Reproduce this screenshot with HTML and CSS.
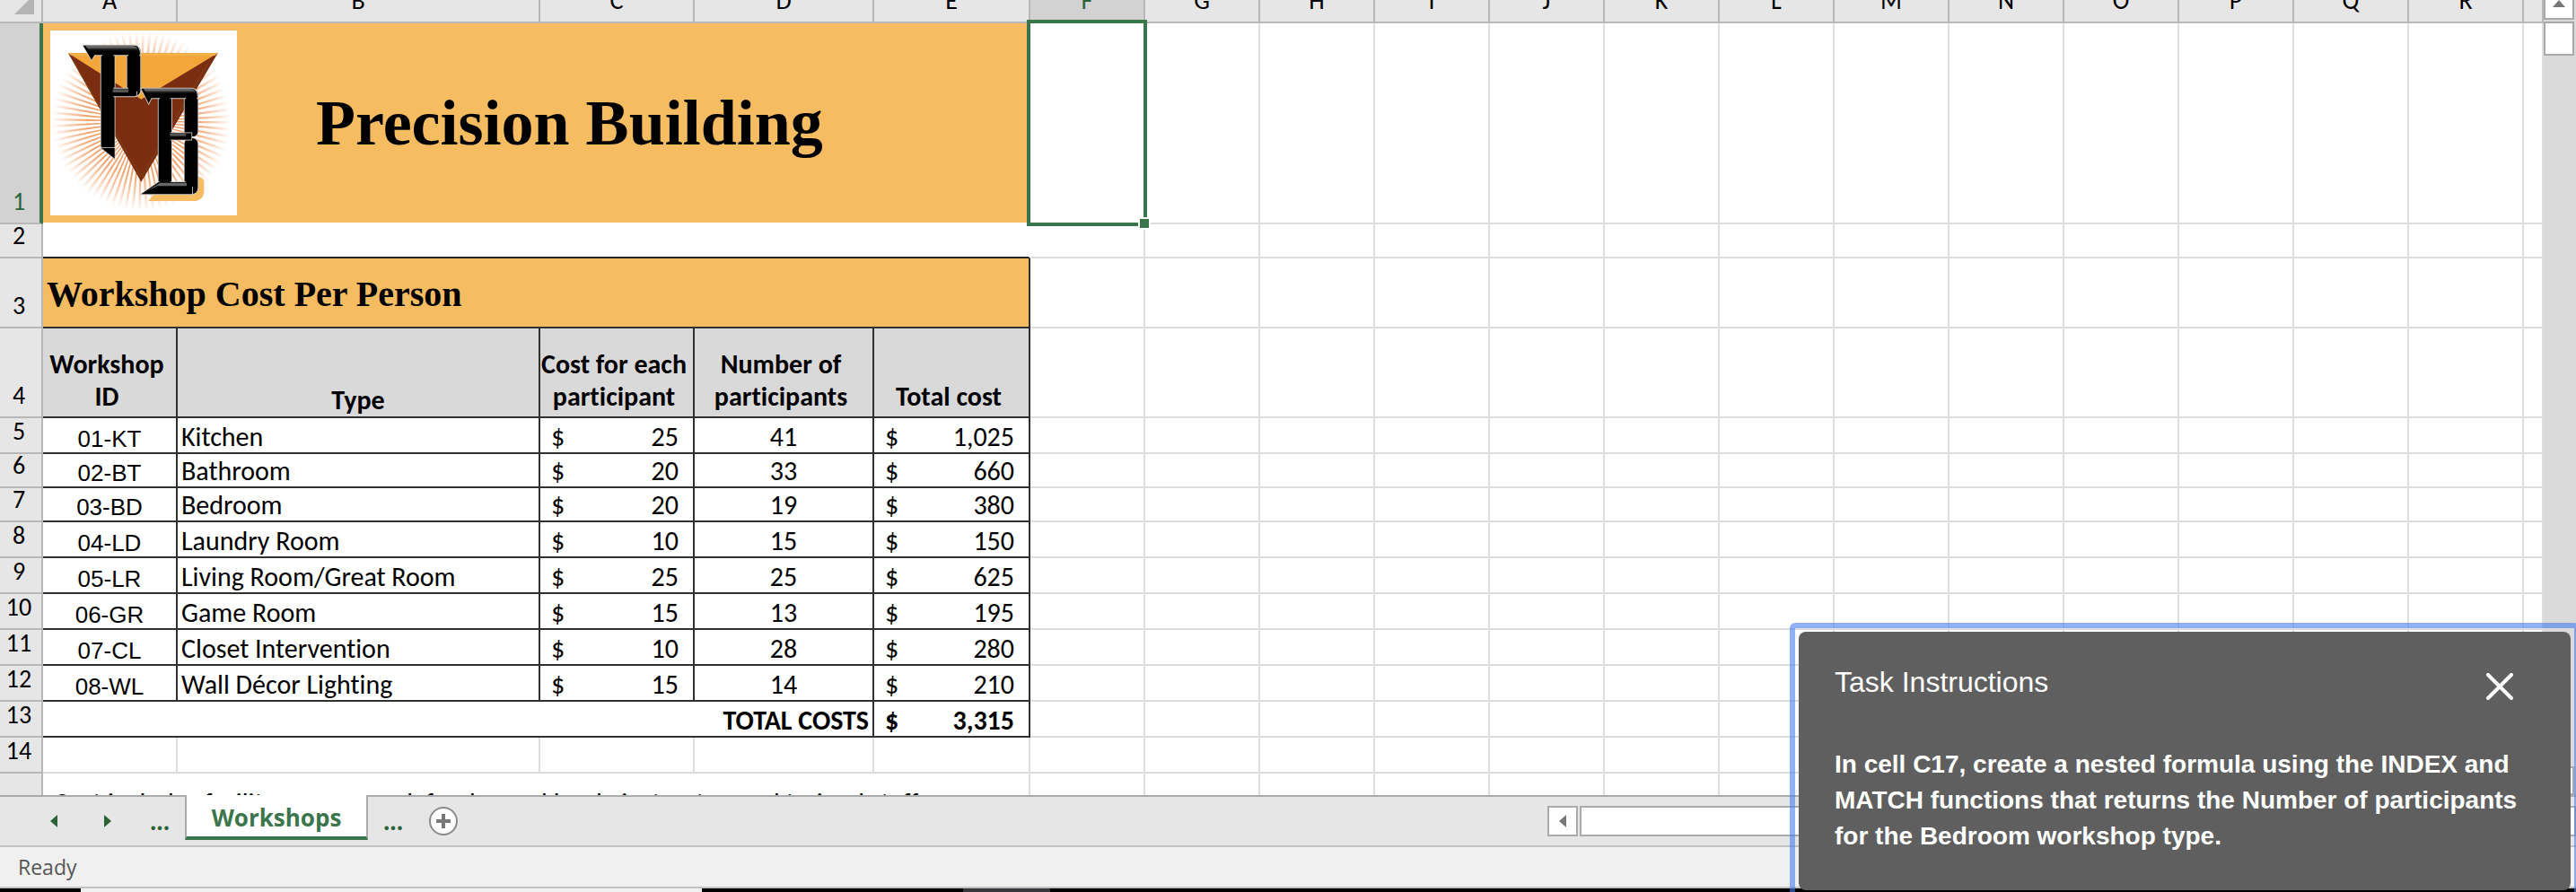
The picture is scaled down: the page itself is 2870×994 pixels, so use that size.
FILE: index.html
```
<!DOCTYPE html>
<html lang="en">
<head>
<meta charset="utf-8">
<title>Precision Building - Workshops</title>
<link rel="stylesheet" href="styles.css">
</head>
<body>
<main class="workspace">
  <div class="viewport">
    <table class="sheet">
      <colgroup>
        <col class="col-head"><col class="col-a"><col class="col-b"><col class="col-c"><col class="col-d"><col class="col-e">
        <col class="col-std" span="13"><col>
      </colgroup>
      <thead>
        <tr class="letters">
          <th class="corner"><svg class="corner-mark" viewBox="0 0 22 22" aria-hidden="true"><path d="M22 0V22H0Z"/></svg></th>
          <th>A</th><th>B</th><th>C</th><th>D</th><th>E</th><th class="active">F</th><th>G</th><th>H</th><th>I</th><th>J</th><th>K</th><th>L</th><th>M</th><th>N</th><th>O</th><th>P</th><th>Q</th><th>R</th><th></th>
        </tr>
      </thead>
      <tbody>
        <tr class="row-title">
          <th class="num active-row">1</th>
          <td class="banner" colspan="5">
            <div class="brand">
              <svg class="logo" viewBox="18 42 624 618" role="img" aria-label="Precision Building logo">
                <defs>
                  <radialGradient id="burst" gradientUnits="userSpaceOnUse" cx="322" cy="345" r="300">
                    <stop offset="0" stop-color="#ee8a45"/>
                    <stop offset=".6" stop-color="#f2a06a"/>
                    <stop offset="1" stop-color="#fff"/>
                  </radialGradient>
                  <linearGradient id="shine" x1="0" y1="0" x2="0" y2="1">
                    <stop offset="0" stop-color="#8c8c8c"/>
                    <stop offset=".7" stop-color="#111"/>
                    <stop offset="1" stop-color="#000"/>
                  </linearGradient>
                </defs>
                <rect x="18" y="42" width="624" height="618" fill="#fff"/>
                <circle cx="322" cy="345" r="150" fill="none" stroke="url(#burst)" stroke-width="300" pathLength="160" stroke-dasharray="0.8 1.2"/>
                <path d="M78 118H578L322 548Z" fill="#7a2d10"/>
                <path d="M78 118H578L322 272Z" fill="#f3a63a"/>
                <path d="M78 118H578L568 126H90Z" fill="#f6b24a"/>
                <path d="M94 142L322 532L550 142" fill="none" stroke="#7d4512" stroke-width="3"/>
                <path d="M345 612L385 570H505V530Q532 530 532 550V575Q532 612 496 612Z" fill="#f5bc62"/>
                <g fill="#000" stroke="#d6cfc8" stroke-width="5" paint-order="stroke">
                  <rect x="188" y="96" width="45" height="340"/>
                  <path d="M188 434H233V470Z"/>
                  <rect x="275" y="94" width="44" height="166" rx="16"/>
                  <rect x="222" y="236" width="84" height="26" rx="6"/>
                  <path d="M128 92H300Q318 92 318 124H166L156 140Z"/>
                </g>
                <rect x="192" y="110" width="37" height="322"/>
                <rect x="279" y="110" width="36" height="135"/>
                <path d="M136 94H298Q310 96 314 112H150Z" fill="url(#shine)"/>
                <rect x="226" y="238" width="54" height="11" rx="5" fill="#555"/>
                <g fill="#000" stroke="#d6cfc8" stroke-width="5" paint-order="stroke">
                  <rect x="380" y="242" width="43" height="340"/>
                  <rect x="467" y="238" width="44" height="158" rx="16"/>
                  <rect x="467" y="402" width="44" height="186" rx="18"/>
                  <rect x="414" y="385" width="76" height="22"/>
                  <path d="M322 236H492Q510 238 510 268H356L347 286Z"/>
                  <path d="M322 589L380 549H492V589Z"/>
                </g>
                <rect x="384" y="256" width="35" height="310"/>
                <rect x="471" y="256" width="36" height="120"/>
                <rect x="471" y="424" width="36" height="140"/>
                <path d="M330 238H490Q503 240 507 254H342Z" fill="url(#shine)"/>
                <path d="M340 580L384 551H474V562H376Z" fill="#666"/>
                <rect x="418" y="387" width="54" height="8" fill="#555"/>
              </svg>
              <h1 class="title">Precision Building</h1>
            </div>
          </td>
          <td class="selected"><span class="selection"><span class="handle"></span></span></td><td></td><td></td><td></td><td></td><td></td><td></td><td></td><td></td><td></td><td></td><td></td><td></td><td></td>
        </tr>
        <tr class="row-gap">
          <th class="num">2</th>
          <td class="above-table" colspan="5"></td>
          <td></td><td></td><td></td><td></td><td></td><td></td><td></td><td></td><td></td><td></td><td></td><td></td><td></td><td></td>
        </tr>
        <tr class="row-section">
          <th class="num">3</th>
          <td class="section box" colspan="5">Workshop Cost Per Person</td>
          <td></td><td></td><td></td><td></td><td></td><td></td><td></td><td></td><td></td><td></td><td></td><td></td><td></td><td></td>
        </tr>
        <tr class="row-fields">
          <th class="num">4</th>
          <th class="field box">Workshop<br>ID</th><th class="field single box">Type</th><th class="field box">Cost for each<br>participant</th><th class="field box">Number of<br>participants</th><th class="field box">Total cost</th>
          <td></td><td></td><td></td><td></td><td></td><td></td><td></td><td></td><td></td><td></td><td></td><td></td><td></td><td></td>
        </tr>
        <tr>
          <th class="num">5</th>
          <td class="id box">01-KT</td><td class="type box">Kitchen</td><td class="box"><span class="money"><span>$</span><span>25</span></span></td><td class="count box">41</td><td class="box"><span class="money"><span>$</span><span>1,025</span></span></td>
          <td></td><td></td><td></td><td></td><td></td><td></td><td></td><td></td><td></td><td></td><td></td><td></td><td></td><td></td>
        </tr>
        <tr class="row-low">
          <th class="num">6</th>
          <td class="id box">02-BT</td><td class="type box">Bathroom</td><td class="box"><span class="money"><span>$</span><span>20</span></span></td><td class="count box">33</td><td class="box"><span class="money"><span>$</span><span>660</span></span></td>
          <td></td><td></td><td></td><td></td><td></td><td></td><td></td><td></td><td></td><td></td><td></td><td></td><td></td><td></td>
        </tr>
        <tr class="row-low">
          <th class="num">7</th>
          <td class="id box">03-BD</td><td class="type box">Bedroom</td><td class="box"><span class="money"><span>$</span><span>20</span></span></td><td class="count box">19</td><td class="box"><span class="money"><span>$</span><span>380</span></span></td>
          <td></td><td></td><td></td><td></td><td></td><td></td><td></td><td></td><td></td><td></td><td></td><td></td><td></td><td></td>
        </tr>
        <tr>
          <th class="num">8</th>
          <td class="id box">04-LD</td><td class="type box">Laundry Room</td><td class="box"><span class="money"><span>$</span><span>10</span></span></td><td class="count box">15</td><td class="box"><span class="money"><span>$</span><span>150</span></span></td>
          <td></td><td></td><td></td><td></td><td></td><td></td><td></td><td></td><td></td><td></td><td></td><td></td><td></td><td></td>
        </tr>
        <tr>
          <th class="num">9</th>
          <td class="id box">05-LR</td><td class="type box">Living Room/Great Room</td><td class="box"><span class="money"><span>$</span><span>25</span></span></td><td class="count box">25</td><td class="box"><span class="money"><span>$</span><span>625</span></span></td>
          <td></td><td></td><td></td><td></td><td></td><td></td><td></td><td></td><td></td><td></td><td></td><td></td><td></td><td></td>
        </tr>
        <tr>
          <th class="num">10</th>
          <td class="id box">06-GR</td><td class="type box">Game Room</td><td class="box"><span class="money"><span>$</span><span>15</span></span></td><td class="count box">13</td><td class="box"><span class="money"><span>$</span><span>195</span></span></td>
          <td></td><td></td><td></td><td></td><td></td><td></td><td></td><td></td><td></td><td></td><td></td><td></td><td></td><td></td>
        </tr>
        <tr>
          <th class="num">11</th>
          <td class="id box">07-CL</td><td class="type box">Closet Intervention</td><td class="box"><span class="money"><span>$</span><span>10</span></span></td><td class="count box">28</td><td class="box"><span class="money"><span>$</span><span>280</span></span></td>
          <td></td><td></td><td></td><td></td><td></td><td></td><td></td><td></td><td></td><td></td><td></td><td></td><td></td><td></td>
        </tr>
        <tr>
          <th class="num">12</th>
          <td class="id box">08-WL</td><td class="type box">Wall Décor Lighting</td><td class="box"><span class="money"><span>$</span><span>15</span></span></td><td class="count box">14</td><td class="box"><span class="money"><span>$</span><span>210</span></span></td>
          <td></td><td></td><td></td><td></td><td></td><td></td><td></td><td></td><td></td><td></td><td></td><td></td><td></td><td></td>
        </tr>
        <tr class="row-total">
          <th class="num">13</th>
          <td class="total box" colspan="4">TOTAL COSTS</td><td class="box"><span class="money"><span>$</span><span>3,315</span></span></td>
          <td></td><td></td><td></td><td></td><td></td><td></td><td></td><td></td><td></td><td></td><td></td><td></td><td></td><td></td>
        </tr>
        <tr>
          <th class="num">14</th>
          <td></td><td></td><td></td><td></td><td></td>
          <td></td><td></td><td></td><td></td><td></td><td></td><td></td><td></td><td></td><td></td><td></td><td></td><td></td><td></td>
        </tr>
        <tr class="row-note">
          <th class="num"></th>
          <td class="note" colspan="5">Cost includes facility usage, snack foods, workbook, instructor, and trained staff</td>
          <td></td><td></td><td></td><td></td><td></td><td></td><td></td><td></td><td></td><td></td><td></td><td></td><td></td><td></td>
        </tr>
      </tbody>
    </table>
  </div>
  <div class="vscroll">
    <button class="vbutton" aria-label="Scroll up"><svg viewBox="0 0 14 8" width="14" height="8" aria-hidden="true"><path d="M7 0L14 8H0Z"/></svg></button>
    <div class="vthumb"></div>
    <button class="vbutton down" aria-label="Scroll down"><svg viewBox="0 0 14 8" width="14" height="8" aria-hidden="true"><path d="M0 0H14L7 8Z"/></svg></button>
  </div>
</main>
<nav class="tabbar" aria-label="Sheets">
  <button class="tool" aria-label="Previous sheet"><svg viewBox="0 0 8 14" width="8" height="14" aria-hidden="true"><path d="M8 0V14L0 7Z"/></svg></button>
  <button class="tool" aria-label="Next sheet"><svg viewBox="0 0 8 14" width="8" height="14" aria-hidden="true"><path d="M0 0V14L8 7Z"/></svg></button>
  <button class="more">...</button>
  <button class="tab">Workshops</button>
  <button class="more">...</button>
  <button class="add" aria-label="New sheet"><svg viewBox="0 0 32 32" width="32" height="32" aria-hidden="true"><circle cx="16" cy="16" r="15"/><path class="plus" d="M16 8V24M8 16H24"/></svg></button>
  <div class="hscroll">
    <button class="hbutton" aria-label="Scroll left"><svg viewBox="0 0 8 14" width="8" height="14" aria-hidden="true"><path d="M8 0V14L0 7Z"/></svg></button>
    <div class="hthumb"></div>
  </div>
</nav>
<footer class="status">Ready</footer>
<div class="dock"></div>
<aside class="focus-ring">
  <section class="panel">
    <header class="panel-head">
      <h2 class="panel-title">Task Instructions</h2>
      <button class="close" aria-label="Close"><svg viewBox="0 0 30 30" width="30" height="30" aria-hidden="true"><path d="M2 2L28 28M28 2L2 28"/></svg></button>
    </header>
    <p class="panel-text">In cell C17, create a nested formula using the INDEX and MATCH functions that returns the Number of participants for the Bedroom workshop type.</p>
  </section>
</aside>
</body>
</html>
```
FILE: styles.css
```
* { box-sizing: border-box; }

body {
  margin: 0;
  height: 100vh;
  overflow: hidden;
  display: flex;
  flex-direction: column;
  background: #fff;
  color: #000;
  font-family: Carlito, Calibri, Lato, sans-serif;
  font-size: 30px;
  font-variant-ligatures: none;
}

button { padding: 0; border: 0; background: none; font: inherit; color: inherit; }
svg { display: block; }

.workspace { flex: 1; min-height: 0; display: flex; }
.viewport { flex: 1; min-width: 0; overflow: hidden; }

/* Spreadsheet grid; the column letters are scrolled half out of view */
.sheet {
  width: 100%;
  margin-top: -26px;
  table-layout: fixed;
  border-collapse: separate;
  border-spacing: 0;
  line-height: 34px;
}
.col-head { width: 48px; }
.col-a { width: 150px; }
.col-b { width: 404px; }
.col-c { width: 172px; }
.col-d { width: 200px; }
.col-e { width: 174px; }
.col-std { width: 128px; }

.sheet th, .sheet td {
  padding: 0;
  vertical-align: bottom;
  border-right: 2px solid #dedede;
  border-bottom: 2px solid #dedede;
  white-space: nowrap;
}
.sheet tr { height: 40px; }
.sheet .letters { height: 52px; }
.sheet .row-title { height: 224px; }
.sheet .row-gap, .sheet .row-low { height: 38px; }
.sheet .row-section { height: 78px; }
.sheet .row-fields { height: 100px; }
.sheet .row-note { height: 56px; }

.sheet .letters th {
  padding-bottom: 11px;
  background: #e6e6e6;
  border-color: #b8b8b8;
  font-size: 28px;
  line-height: 24px;
  font-weight: 400;
}
.sheet .letters .corner { padding: 0 8px 8px 16px; }
.corner-mark { width: 22px; height: 22px; fill: #b4b4b4; }
.sheet .letters .active { background: #d2d2d2; color: #2b6338; }
.sheet .num {
  padding: 0 4px 11px 0;
  background: #e6e6e6;
  border-color: #b8b8b8;
  font-size: 28px;
  line-height: 24px;
  font-weight: 400;
  text-align: center;
}
.sheet .active-row { background: #d2d2d2; color: #2b6338; border-right: 4px solid #3b754b; padding-right: 2px; }

.sheet .banner { background: #f5bc62; vertical-align: top; border-right-color: #f5bc62; border-bottom-color: #fff; background-clip: padding-box; }
.brand { display: flex; align-items: center; gap: 88px; padding: 8px; }
.logo { width: 208px; height: 206px; }
.title { margin: 0; font-family: "Liberation Serif", serif; font-size: 72px; line-height: 80px; font-weight: 700; }

.selected { position: relative; }
.selection { position: absolute; inset: -4px; border: 4px solid #3b754b; z-index: 1; }
.handle { position: absolute; right: -8px; bottom: -8px; width: 14px; height: 14px; background: #3b754b; border: 2px solid #fff; }

.sheet .above-table { border-right-color: #fff; border-bottom-color: #262626; }
.sheet .box { border-color: #303030; }
.sheet .section {
  padding: 0 4px 14px;
  background: #f5bc62;
  font-family: "Liberation Serif", serif;
  font-size: 40px;
  line-height: 44px;
  font-weight: 700;
}
.sheet .field { padding: 0 6px 4px 0; background: #d9d9d9; line-height: 36px; font-weight: 700; text-align: center; }
.sheet .single { padding: 0; }
.id { font-family: "Liberation Sans", sans-serif; font-size: 26px; line-height: 30px; text-align: center; }
.sheet .type { padding-left: 4px; }
.count { text-align: center; }
.money { display: flex; justify-content: space-between; padding: 0 16px 0 12px; }
.row-total { font-weight: 700; }
.sheet .total { padding-right: 4px; text-align: right; }
.sheet .note { padding: 16px 12px 0; vertical-align: top; }

.vscroll {
  width: 36px;
  padding-right: 2px;
  display: flex;
  flex-direction: column;
  gap: 2px;
  background: #dadada;
}
.vbutton { display: flex; justify-content: center; height: 22px; border: 2px solid #a9a9a9; border-top: 0; background: #fff; }
.vbutton svg, .hbutton svg { fill: #777; }
.vthumb { height: 38px; border: 2px solid #a9a9a9; background: #fff; }
.down { margin-top: auto; height: 32px; align-items: center; border-top: 2px solid #a9a9a9; }

.tabbar {
  height: 58px;
  display: flex;
  align-items: center;
  padding-left: 30px;
  background: #e6e6e6;
  border-top: 2px solid #ababab;
  border-bottom: 2px solid #c2c2c2;
  color: #2b6338;
  font-family: "Open Sans", sans-serif;
  font-size: 26px;
}
.tool { width: 60px; height: 40px; display: flex; align-items: center; justify-content: center; }
.tool svg { fill: #2b6338; }
.more { width: 56px; height: 40px; line-height: 40px; text-align: center; font-weight: 700; }
.tab {
  align-self: flex-start;
  margin-top: -2px;
  padding-top: 4px;
  width: 204px;
  height: 50px;
  background: #fff;
  border: 2px solid #ababab;
  border-top: 0;
  border-bottom: 4px solid #3b754b;
  color: #3b754b;
  font-weight: 700;
}
.add { margin-left: 12px; }
.add svg { fill: #fff; stroke: #8a8a8a; stroke-width: 2; }
.add .plus { stroke: #777; stroke-width: 4; }
.hscroll { flex: 1; max-width: 1146px; margin-left: auto; height: 34px; display: flex; gap: 2px; }
.hbutton { width: 34px; display: flex; align-items: center; justify-content: center; background: #fff; border: 2px solid #ababab; }
.hthumb { flex: 1; background: #fff; border: 2px solid #ababab; }

.status {
  height: 46px;
  padding-left: 20px;
  background: #f0f0f0;
  border-bottom: 2px solid #c2c2c2;
  color: #555;
  font-family: "Open Sans", sans-serif;
  font-size: 23px;
  line-height: 44px;
}
.dock {
  height: 4px;
  background: linear-gradient(90deg, #000 90px, #f0f0f0 90px 782px, #000 782px 1073px, #36363c 1073px 1170px, #000 1170px);
}

/* Floating task card with its focus ring */
.focus-ring {
  position: fixed;
  right: -4px;
  bottom: -8px;
  width: 880px;
  padding: 4px;
  border: 6px solid rgba(70, 125, 240, .6);
  border-radius: 6px;
}
.panel {
  padding: 36px 40px 40px;
  background: #5f5f5f;
  border-radius: 8px;
  color: #fff;
  font-family: "Liberation Sans", sans-serif;
}
.panel-head { display: flex; justify-content: space-between; align-items: flex-end; padding-right: 24px; }
.panel-title { margin: 0; font-size: 32px; line-height: 40px; font-weight: 400; }
.close svg { fill: none; stroke: #fff; stroke-width: 4; stroke-linecap: round; }
.panel-text { margin: 52px 0 0; font-size: 28px; line-height: 40px; font-weight: 700; }
```
